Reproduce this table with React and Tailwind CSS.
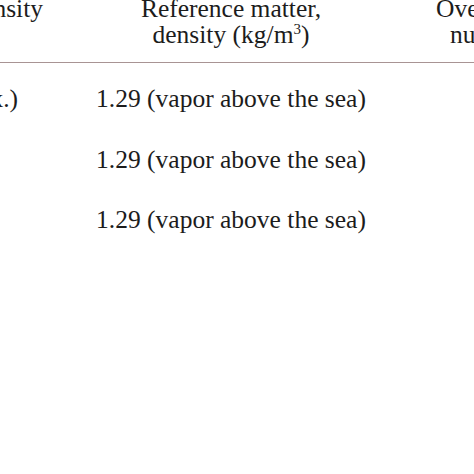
export default function App() {
  const rows = ["1.29 (vapor above the sea)", "1.29 (vapor above the sea)", "1.29 (vapor above the sea)"];
  return (
    <div className="w-[474px] h-[474px] overflow-hidden bg-white text-[#1c1c1c] text-[25.5px] leading-[26px]" style={{ fontFamily: '"Liberation Serif", "Times New Roman", serif' }}>
      <div className="flex items-start border-b-[1.5px] border-[#a89494] h-[67px] -mt-[4px]">
        <div className="w-[200px] -ml-[157px] shrink-0 text-right">Density</div>
        <div className="w-[300px] shrink-0 text-center ml-[38px] whitespace-nowrap">
          <div>Reference matter,</div>
          <div>density (kg/m<span className="relative -top-[9px] text-[15px] leading-none">3</span>)</div>
        </div>
        <div className="shrink-0 ml-[55px] whitespace-nowrap">
          <div>Overall</div>
          <div className="pl-[14px]">number</div>
        </div>
      </div>
      <div className="flex flex-col gap-[34.5px] pt-[23px]">
        {rows.map((r, i) => (
          <div key={i} className="flex items-start">
            <div className="w-[200px] -ml-[157px] shrink-0 text-right pr-[25px]">{i === 0 ? "(approx.)" : ""}</div>
            <div className="w-[300px] shrink-0 text-center ml-[38px] whitespace-nowrap">{r}</div>
          </div>
        ))}
      </div>
    </div>
  );
}
